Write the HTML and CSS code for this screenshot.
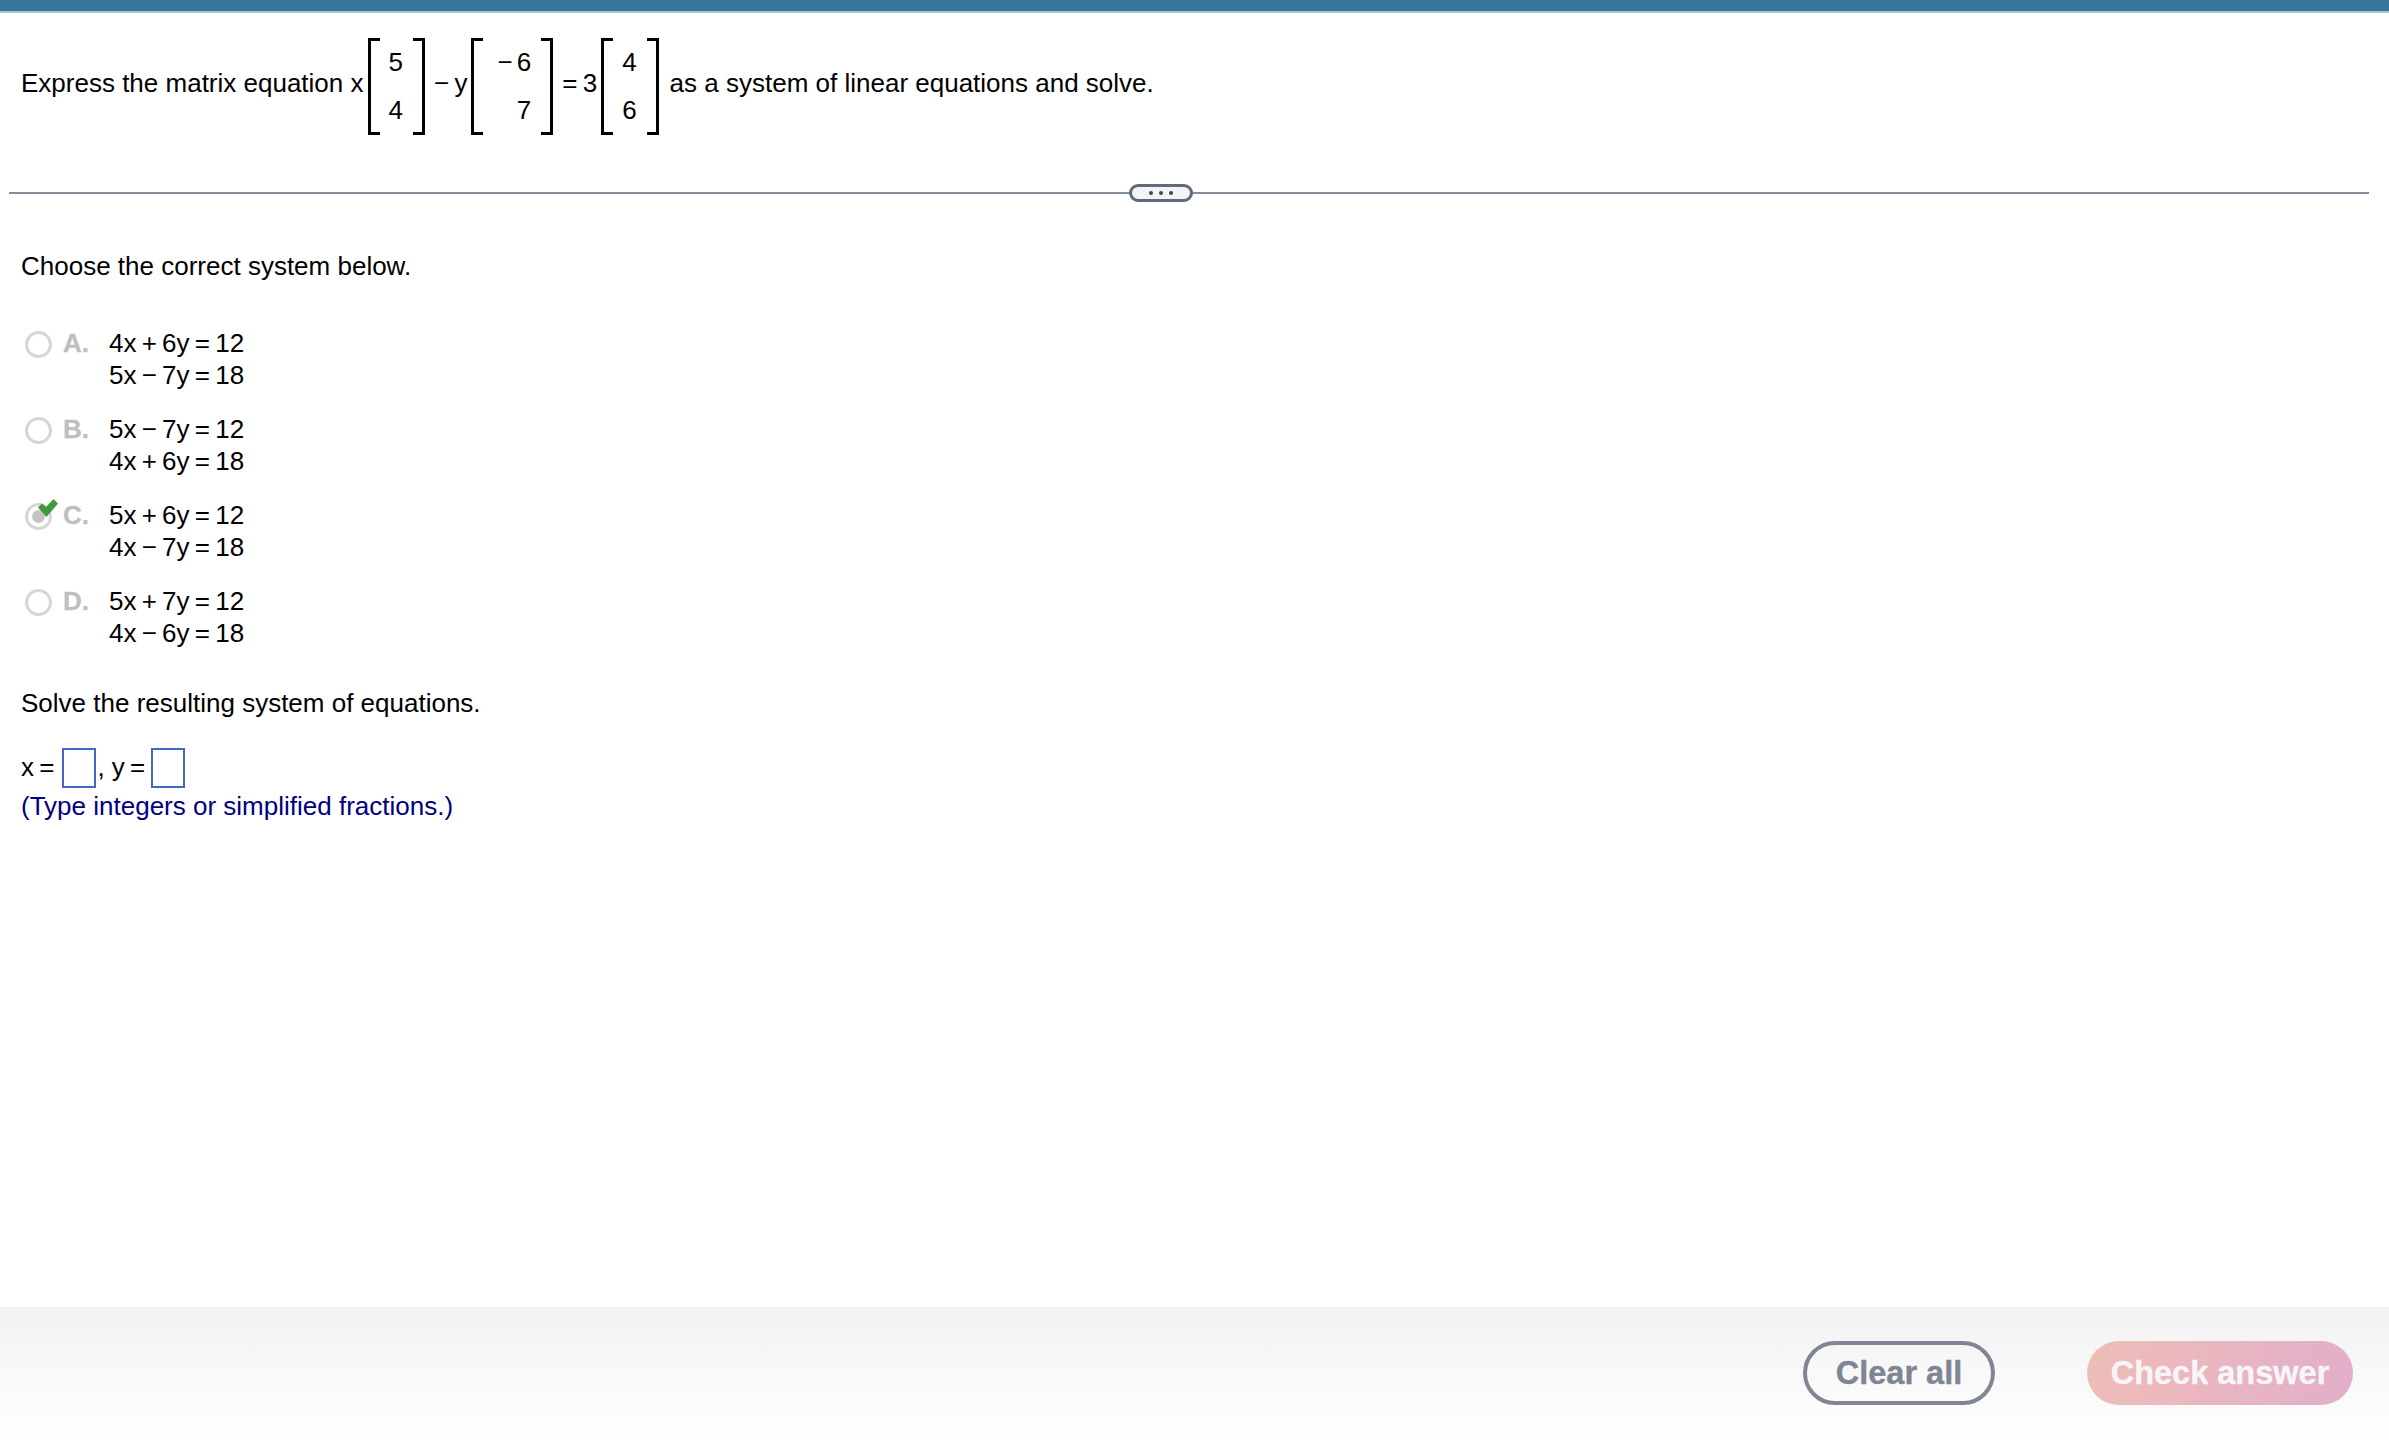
FILE: index.html
```html
<!DOCTYPE html>
<html lang="en">
<head>
    <meta charset="UTF-8">
    <title>Matrix equation</title>
    <link rel="stylesheet" href="styles.css">
</head>
<body>
    <div class="topbar"></div>
    <div class="question">
        <span>Express the matrix equation x</span>
        <div class="matrix"><span>5</span><span>4</span></div>
        <span class="op">− y</span>
        <div class="matrix matrix_wide"><span>− 6</span><span>7</span></div>
        <span class="op">= 3</span>
        <div class="matrix"><span>4</span><span>6</span></div>
        <span class="after">as a system of linear equations and solve.</span>
    </div>
    <div class="divider">
        <div class="more"><i></i><i></i><i></i></div>
    </div>
    <div class="content">
        <p class="choose">Choose the correct system below.</p>
        <div class="options">
            <div class="option">
                <span class="radio"></span>
                <span class="letter">A.</span>
                <div class="math"><p>4x + 6y = 12</p><p>5x − 7y = 18</p></div>
            </div>
            <div class="option">
                <span class="radio"></span>
                <span class="letter">B.</span>
                <div class="math"><p>5x − 7y = 12</p><p>4x + 6y = 18</p></div>
            </div>
            <div class="option">
                <span class="radio selected">
                    <svg class="check" viewBox="0 0 20 18"><path d="M0 8.5 L4 4.5 L8 8 L15.5 0 L20 4.5 L8.5 18 Z"/></svg>
                </span>
                <span class="letter">C.</span>
                <div class="math"><p>5x + 6y = 12</p><p>4x − 7y = 18</p></div>
            </div>
            <div class="option">
                <span class="radio"></span>
                <span class="letter">D.</span>
                <div class="math"><p>5x + 7y = 12</p><p>4x − 6y = 18</p></div>
            </div>
        </div>
        <p class="solve">Solve the resulting system of equations.</p>
        <div class="answer">
            <span>x =</span><span class="box"></span><span class="comma">,</span><span>y =</span><span class="box"></span>
        </div>
        <p class="hint">(Type integers or simplified fractions.)</p>
    </div>
    <div class="footer">
        <button class="clear">Clear all</button>
        <button class="check_answer">Check answer</button>
    </div>
</body>
</html>
```

FILE: styles.css
```css
*{
    box-sizing: border-box;
}
html, body{
    height: 100%;
}
body{
    margin: 0;
    display: flex;
    flex-direction: column;
    font-family: "Liberation Sans", Arial, sans-serif;
    font-size: 26px;
    line-height: 31px;
    color: #000;
    background-color: #fff;
}
p{
    margin: 0;
}
.topbar{
    height: 13px;
    flex: none;
    background-color: #35779a;
    border-bottom: 2px solid #a8c3d3;
}
.question{
    display: flex;
    align-items: center;
    padding: 25px 0 0 21px;
    height: 122px;
    flex: none;
}
.question>span{
    margin-bottom: 7px;
}
.matrix{
    position: relative;
    height: 97px;
    margin-left: 4px;
    padding: 0 22px 0 21px;
    display: grid;
    grid-auto-rows: 48px;
    align-content: start;
    align-items: center;
    text-align: right;
}
.matrix::before, .matrix::after{
    content: "";
    position: absolute;
    top: 0;
    bottom: 0;
    width: 9px;
    border: 3px solid #000;
}
.matrix::before{
    left: 0;
    border-right: none;
}
.matrix::after{
    right: 0;
    border-left: none;
}
.matrix_wide{
    padding-left: 26px;
    word-spacing: -3px;
}
.op{
    margin-left: 9px;
    word-spacing: -2px;
}
.after{
    margin-left: 11px;
}
.divider{
    position: relative;
    flex: none;
    height: 2px;
    margin: 57px 20px 0 9px;
    background-color: #848d9c;
}
.more{
    position: absolute;
    left: 1120px;
    top: -8px;
    width: 64px;
    height: 18px;
    display: flex;
    justify-content: center;
    align-items: center;
    gap: 6px;
    background-color: #f2f4f7;
    border: 3px solid #5f6b7a;
    border-radius: 9px;
}
.more>i{
    width: 4px;
    height: 4px;
    border-radius: 50%;
    background-color: #444;
}
.content{
    flex: 1;
    padding: 57px 21px 0;
}
.options{
    margin-top: 45px;
    display: flex;
    flex-direction: column;
    gap: 22px;
}
.option{
    display: flex;
    align-items: flex-start;
    line-height: 32px;
}
.radio{
    position: relative;
    width: 27px;
    height: 27px;
    margin: 4px 0 0 4px;
    border: 3px solid #d6d6d6;
    border-radius: 50%;
    flex: none;
}
.radio.selected::before{
    content: "";
    position: absolute;
    left: 4px;
    top: 4px;
    width: 13px;
    height: 13px;
    border-radius: 50%;
    background-color: #c4c4c4;
}
.check{
    position: absolute;
    left: 10px;
    top: -7px;
    width: 20px;
    height: 18px;
    fill: #3f9a3d;
}
.letter{
    width: 46px;
    margin-left: 11px;
    font-weight: bold;
    color: #bfbfbf;
    -webkit-text-stroke: 0.3px currentColor;
    flex: none;
}
.math{
    word-spacing: -2px;
}
.solve{
    margin-top: 38.5px;
}
.answer{
    display: flex;
    align-items: center;
    height: 40px;
    margin-top: 29px;
    word-spacing: -2px;
}
.box{
    width: 34px;
    height: 40px;
    margin-left: 8px;
    background-color: #fff;
    border: 2px solid #4169c4;
}
.comma{
    margin: 0 7px 0 1px;
}
.answer>.box:last-child{
    margin-left: 6px;
}
.hint{
    margin-top: 3px;
    color: #000080;
}
.footer{
    flex: none;
    height: 135px;
    padding: 34px 36px 0 0;
    display: flex;
    justify-content: flex-end;
    align-items: flex-start;
    gap: 92px;
    background: linear-gradient(#f2f2f2, #fff);
}
.footer>button{
    height: 64px;
    border-radius: 32px;
    font-family: "Liberation Sans", Arial, sans-serif;
    font-size: 32.5px;
    font-weight: bold;
    -webkit-text-stroke: 0.4px currentColor;
    padding: 0;
}
.clear{
    width: 192px;
    border: 4px solid #7f8593;
    color: #7f8593;
    background: transparent;
}
.check_answer{
    width: 266px;
    border: none;
    color: #f7f5f8;
    background: linear-gradient(100deg, #eebdb7, #e3aeca);
}
```
